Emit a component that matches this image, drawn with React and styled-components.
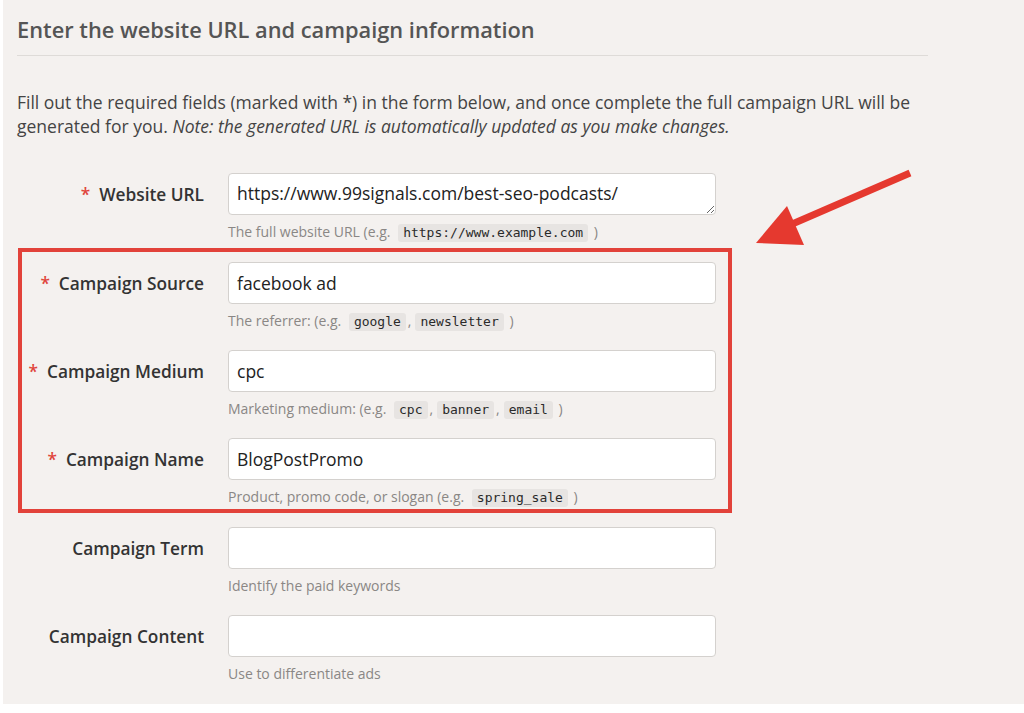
import React from 'react'
import styled, { createGlobalStyle } from 'styled-components';

const GlobalStyle = createGlobalStyle`
    body {
        margin: 0;
        background: #ffffff;
        font-family: "Open Sans", "Liberation Sans", sans-serif;
    }
`;

const website = { label: 'Website URL', required: true, value: 'https://www.99signals.com/best-seo-podcasts/', textarea: true,
    help: ['The full website URL (e.g. ', ['https://www.example.com'], ' )'] };

const boxed = [
    { label: 'Campaign Source', required: true, value: 'facebook ad',
      help: ['The referrer: (e.g. ', ['google', 'newsletter'], ' )'] },
    { label: 'Campaign Medium', required: true, value: 'cpc',
      help: ['Marketing medium: (e.g. ', ['cpc', 'banner', 'email'], ' )'] },
    { label: 'Campaign Name', required: true, value: 'BlogPostPromo',
      help: ['Product, promo code, or slogan (e.g. ', ['spring_sale'], ' )'] },
];

const optional = [
    { label: 'Campaign Term', value: '', help: ['Identify the paid keywords'] },
    { label: 'Campaign Content', value: '', help: ['Use to differentiate ads'] },
];

function Help({ parts }) {
    const [before, codes, after] = parts;
    return (
        <HelpText>
            {before}
            {codes && codes.map((c, i) => (
                <React.Fragment key={c}>
                    {i > 0 && ','}
                    <Code>{c}</Code>
                </React.Fragment>
            ))}
            {after}
        </HelpText>
    );
}

function Field({ field, gap = 20 }) {
    return (
        <Row $gap={gap}>
            <Label>
                {field.required && <Star>*</Star>}
                {field.label}
            </Label>
            {field.textarea
                ? <TextArea defaultValue={field.value} rows={1} />
                : <Input defaultValue={field.value} />}
            <Help parts={field.help} />
        </Row>
    );
}

function App() {
    return (
        <Panel>
            <GlobalStyle />
            <Content>
                <Heading>Enter the website URL and campaign information</Heading>
                <Intro>
                    Fill out the required fields (marked with *) in the form below, and once complete the full campaign URL will be
                    generated for you. <em>Note: the generated URL is automatically updated as you make changes.</em>
                </Intro>
            </Content>
            <Form>
                <Field field={website} gap={7} />
                <Highlight>
                    {boxed.map((f, i) => (
                        <Field key={f.label} field={f} gap={i === boxed.length - 1 ? 0 : 20} />
                    ))}
                </Highlight>
                {optional.map(f => <Field key={f.label} field={f} />)}
            </Form>
            <Arrow viewBox="0 0 170 90" aria-hidden="true">
                <line x1="157" y1="5" x2="30" y2="60" stroke="#e5392f" strokeWidth="7" />
                <polygon points="3,75 34,38 51,77" fill="#e5392f" />
            </Arrow>
        </Panel>
    );
}

const Panel = styled.div`
    position: relative;
    margin-left: 3px;
    height: 704px;
    background: #f4f1ef;
    overflow: hidden;
`;

const Content = styled.div`
    padding: 16px 0 0 14px;
    width: 911px;
`;

const Heading = styled.h2`
    margin: 0;
    padding-bottom: 11px;
    border-bottom: 1px solid #dedbd8;
    font-size: 21.8px;
    line-height: 28px;
    font-weight: 600;
    color: #555;
`;

const Intro = styled.p`
    margin: 34px 0 0;
    font-size: 17.5px;
    line-height: 24px;
    color: #444;

    em {
        font-style: italic;
    }
`;

const Form = styled.div`
    margin: 35px 0 0 19px;
    width: 694px;
`;

const Row = styled.div`
    display: grid;
    grid-template-columns: 182px 488px;
    column-gap: 24px;
    align-items: center;
    margin-bottom: ${p => p.$gap}px;
`;

const Label = styled.label`
    text-align: right;
    font-size: 17.3px;
    font-weight: 600;
    color: #333;
    white-space: nowrap;
`;

const Star = styled.span`
    color: #e0453c;
    margin-right: 9px;
`;

const Input = styled.input`
    grid-column: 2;
    box-sizing: border-box;
    height: 42px;
    padding: 0 8px;
    border: 1px solid #d4d1ce;
    border-radius: 4px;
    background: #fff;
    font-family: "Open Sans", "Liberation Sans", sans-serif;
    font-size: 17.5px;
    color: #222;
    outline: none;
`;

const TextArea = styled.textarea`
    grid-column: 2;
    box-sizing: border-box;
    height: 42px;
    padding: 8px 8px 0;
    border: 1px solid #d4d1ce;
    border-radius: 4px;
    background: #fff;
    font-family: "Open Sans", "Liberation Sans", sans-serif;
    font-size: 17.5px;
    line-height: 22px;
    color: #222;
    outline: none;
    resize: vertical;
    overflow: hidden;
`;

const HelpText = styled.div`
    grid-column: 2;
    height: 18px;
    margin-top: 8px;
    font-size: 14px;
    line-height: 18px;
    color: #8a8785;
    white-space: nowrap;
`;

const Code = styled.code`
    display: inline-block;
    margin: 0 2px 0 4px;
    padding: 0 5px;
    border-radius: 3px;
    background: #e7e4e2;
    font-family: "DejaVu Sans Mono", "Liberation Mono", monospace;
    font-size: 13px;
    line-height: 18px;
    color: #2a2a2a;
`;

const Highlight = styled.div`
    margin: 0 -16px 14px -4px;
    padding: 10px 0 3px 0;
    border: 4px solid #e2423a;
`;

const Arrow = styled.svg`
    position: absolute;
    left: 750px;
    top: 168px;
    width: 170px;
    height: 90px;
`;

export default App;
